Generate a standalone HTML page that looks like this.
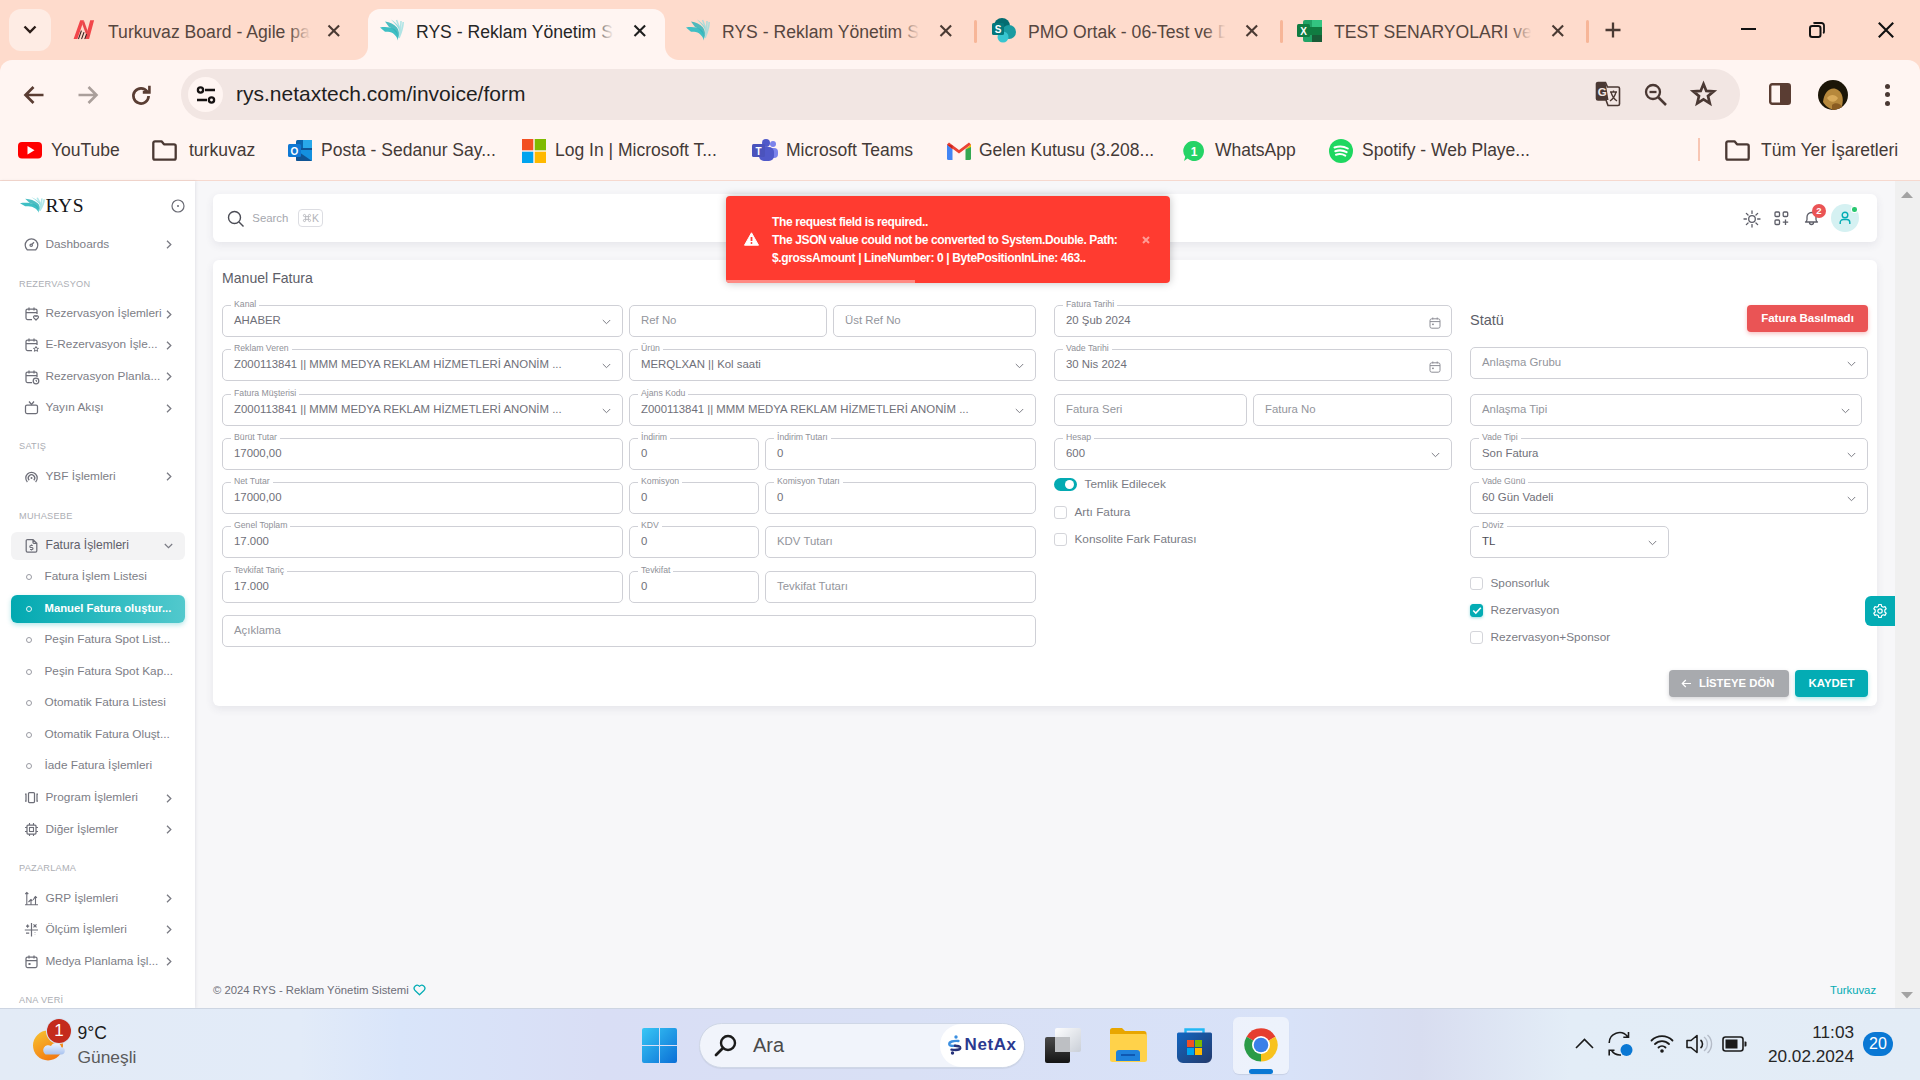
<!DOCTYPE html>
<html><head><meta charset="utf-8"><title>RYS</title>
<style>
*{box-sizing:border-box;margin:0;padding:0}
html,body{width:1920px;height:1080px;overflow:hidden;font-family:"Liberation Sans",sans-serif;background:#f5f5f9;position:relative}
.a{position:absolute}
svg{display:block;overflow:visible}
.tabt{position:absolute;font-size:17.6px;color:#303030;white-space:nowrap;overflow:hidden;height:24px;line-height:24px}
.fade{position:absolute;top:0;right:0;width:24px;height:24px}
.bm{position:absolute;font-size:17.5px;color:#443a37;line-height:24px;white-space:nowrap}
.sb{position:absolute;font-size:11.8px;color:#7c7d86;white-space:nowrap;line-height:16px}
.sec{position:absolute;font-size:9.2px;color:#acaeb4;letter-spacing:.25px;line-height:12px}
.card{position:absolute;background:#fff;border-radius:6px;box-shadow:0 3px 9px rgba(60,60,90,.09)}
.fld{position:absolute;border:1px solid #cfd0d6;border-radius:5px;background:#fff}
.fld .v{position:absolute;left:11px;top:0;line-height:29px;font-size:11.4px;color:#6f7079;white-space:nowrap}
.fld .ph{color:#93959c}
.fld .l{position:absolute;left:8px;top:-7px;font-size:8.7px;line-height:10px;color:#8f9198;background:#fff;padding:0 3px;white-space:nowrap}
.chev{position:absolute;right:12px;top:11px}
.cbx{position:absolute;width:13px;height:13px;border:1px solid #d4d5da;border-radius:3px;background:#fff}
.ct{position:absolute;font-size:11.8px;color:#7a7b84;line-height:14px;white-space:nowrap}
</style></head><body>
<div class="a" style="left:0;top:0;width:1920px;height:80px;background:#fedbcc"></div>
<div class="a" style="left:9px;top:9px;width:42px;height:42px;border-radius:12px;background:#feece4"></div>
<svg class="a" style="left:21px;top:24px" width="18" height="12" viewBox="0 0 18 12"><path d="M3.5 2.5 L9 8 L14.5 2.5" fill="none" stroke="#2b1d18" stroke-width="2.4"/></svg>
<div class="a" style="left:368px;top:9px;width:297px;height:52px;background:#fff5f2;border-radius:12px 12px 0 0"></div>
<svg class="a" style="left:73px;top:20px" width="22" height="19" viewBox="0 0 22 19">
<path d="M0.6 18.9 L4.4 18.9 L10.8 0.3 L7.2 0.3 Z M12.2 18.9 L16.1 18.9 L21.1 0.3 L17.2 0.3 Z" fill="#f2464a"/>
<path d="M9.2 4 L10.8 0.3 L16.3 15.5 L14.8 18.9 Z" fill="#e8474b"/>
<path d="M5.6 18.6 L8.3 11 M8.7 18.6 L10.9 12.5 M11.9 18.6 L13.4 14.5" stroke="#3a2222" stroke-width="1.1" stroke-linecap="round"/></svg>
<div class="tabt" style="left:108px;top:20px;width:205px;color:#56463f">Turkuvaz Board - Agile pano<div class="fade" style="background:linear-gradient(90deg,#fedbcc00,#fedbcc 90%)"></div></div>
<svg class="a" style="left:328.2px;top:25.2px" width="11.6" height="11.6" viewBox="0 0 11.6 11.6"><path d="M0.5 0.5 L11.1 11.1 M11.1 0.5 L0.5 11.1" stroke="#4a3a33" stroke-width="2.1"/></svg>
<svg class="a" style="left:380px;top:19px" width="24" height="22" viewBox="0 0 24 22" preserveAspectRatio="none">
<path d="M0 8.5 C5 7.5 11 8 15 10.5 C17.5 12.5 18.5 16 18 21.5 C16.5 16.5 13 13 8 12.7 L5 12.8 Z" fill="#3fbfc4"/>
<path d="M5 2.5 C10 3 14 5 17 8.5 C19 11 19.5 15 18.5 19 C17 14 14 10 9 8 Z" fill="#2fb3b9" opacity=".85"/>
<path d="M11 0.5 C14 2 17 5 19 8 L20 12 C18 8 15 4.5 11 0.5Z" fill="#7fd8db" opacity=".85"/>
<path d="M16.5 1 C18 4 19.5 8 20 13 M21 2 C21 6 20.5 10 19.5 16 M23.2 3 C23 8 22 12 19 19" fill="none" stroke="#8fdde0" stroke-width="1.6" opacity=".7"/>
</svg>
<div class="tabt" style="left:416px;top:20px;width:200px;color:#262626">RYS - Reklam Yönetim Sistemi<div class="fade" style="background:linear-gradient(90deg,#fff5f200,#fff5f2 90%)"></div></div>
<svg class="a" style="left:634.2px;top:25.2px" width="11.6" height="11.6" viewBox="0 0 11.6 11.6"><path d="M0.5 0.5 L11.1 11.1 M11.1 0.5 L0.5 11.1" stroke="#1f1f1f" stroke-width="2.1"/></svg>
<svg class="a" style="left:686px;top:19px" width="24" height="22" viewBox="0 0 24 22" preserveAspectRatio="none">
<path d="M0 8.5 C5 7.5 11 8 15 10.5 C17.5 12.5 18.5 16 18 21.5 C16.5 16.5 13 13 8 12.7 L5 12.8 Z" fill="#3fbfc4"/>
<path d="M5 2.5 C10 3 14 5 17 8.5 C19 11 19.5 15 18.5 19 C17 14 14 10 9 8 Z" fill="#2fb3b9" opacity=".85"/>
<path d="M11 0.5 C14 2 17 5 19 8 L20 12 C18 8 15 4.5 11 0.5Z" fill="#7fd8db" opacity=".85"/>
<path d="M16.5 1 C18 4 19.5 8 20 13 M21 2 C21 6 20.5 10 19.5 16 M23.2 3 C23 8 22 12 19 19" fill="none" stroke="#8fdde0" stroke-width="1.6" opacity=".7"/>
</svg>
<div class="tabt" style="left:722px;top:20px;width:200px;color:#56463f">RYS - Reklam Yönetim Sistemi<div class="fade" style="background:linear-gradient(90deg,#fedbcc00,#fedbcc 90%)"></div></div>
<svg class="a" style="left:940.2px;top:25.2px" width="11.6" height="11.6" viewBox="0 0 11.6 11.6"><path d="M0.5 0.5 L11.1 11.1 M11.1 0.5 L0.5 11.1" stroke="#4a3a33" stroke-width="2.1"/></svg>
<div class="a" style="left:974px;top:20px;width:2.5px;height:23px;background:#f7b698;border-radius:1.5px"></div>
<svg class="a" style="left:991px;top:17px" width="26" height="26" viewBox="0 0 26 26">
<circle cx="11" cy="9" r="8" fill="#036c70"/><circle cx="18" cy="15" r="7" fill="#1a9ba1"/><circle cx="12" cy="20" r="5.5" fill="#37c6d0"/>
<rect x="1" y="6" width="12" height="12" rx="1.5" fill="#03787c"/><text x="7" y="16" font-size="10" font-weight="bold" fill="#fff" text-anchor="middle" font-family="Liberation Sans">S</text></svg>
<div class="tabt" style="left:1028px;top:20px;width:200px;color:#56463f">PMO Ortak - 06-Test ve Dokümantasyon<div class="fade" style="background:linear-gradient(90deg,#fedbcc00,#fedbcc 90%)"></div></div>
<svg class="a" style="left:1246.2px;top:25.2px" width="11.6" height="11.6" viewBox="0 0 11.6 11.6"><path d="M0.5 0.5 L11.1 11.1 M11.1 0.5 L0.5 11.1" stroke="#4a3a33" stroke-width="2.1"/></svg>
<div class="a" style="left:1280px;top:20px;width:2.5px;height:23px;background:#f7b698;border-radius:1.5px"></div>
<svg class="a" style="left:1297px;top:19px" width="26" height="24" viewBox="0 0 26 24">
<rect x="6" y="1" width="19" height="22" rx="2" fill="#21a366"/><rect x="6" y="8" width="19" height="8" fill="#107c41"/><rect x="15" y="1" width="10" height="7" fill="#33c481"/><rect x="15" y="16" width="10" height="7" fill="#185c37"/>
<rect x="0" y="5" width="13" height="13" rx="1.5" fill="#107c41"/><text x="6.5" y="15.5" font-size="10" font-weight="bold" fill="#fff" text-anchor="middle" font-family="Liberation Sans">X</text></svg>
<div class="tabt" style="left:1334px;top:20px;width:200px;color:#56463f">TEST SENARYOLARI ve SONUÇLARI<div class="fade" style="background:linear-gradient(90deg,#fedbcc00,#fedbcc 90%)"></div></div>
<svg class="a" style="left:1552.2px;top:25.2px" width="11.6" height="11.6" viewBox="0 0 11.6 11.6"><path d="M0.5 0.5 L11.1 11.1 M11.1 0.5 L0.5 11.1" stroke="#4a3a33" stroke-width="2.1"/></svg>
<div class="a" style="left:1586px;top:20px;width:2.5px;height:23px;background:#f7b698;border-radius:1.5px"></div>
<svg class="a" style="left:1605px;top:22px" width="16" height="16" viewBox="0 0 16 16"><path d="M8 0.5 V15.5 M0.5 8 H15.5" stroke="#4a3a33" stroke-width="2.3"/></svg>
<div class="a" style="left:1741px;top:27.5px;width:15px;height:2.5px;background:#111"></div>
<svg class="a" style="left:1809px;top:22px" width="16" height="16" viewBox="0 0 16 16"><rect x="1" y="4" width="10.5" height="11" rx="2.2" fill="none" stroke="#111" stroke-width="2"/><path d="M4.5 1.5 A2 2 0 0 1 6.3 1 H12.5 A2.5 2.5 0 0 1 15 3.5 V9.5 A2 2 0 0 1 14.2 11.2" fill="none" stroke="#111" stroke-width="1.8"/></svg>
<svg class="a" style="left:1877.5px;top:22px" width="16" height="16" viewBox="0 0 16 16"><path d="M0.8 0.8 L15.2 15.2 M15.2 0.8 L0.8 15.2" stroke="#111" stroke-width="2.1"/></svg>
<div class="a" style="left:0;top:60px;width:1920px;height:121px;background:#fff5f2;border-radius:12px 12px 0 0"></div>
<div class="a" style="left:0;top:180px;width:1920px;height:1px;background:#f6d9cf"></div>
<div class="a" style="left:354px;top:46px;width:14px;height:15px;background:radial-gradient(circle at 0 0,#fedbcc 13.5px,#fff5f2 14.5px)"></div>
<div class="a" style="left:665px;top:46px;width:14px;height:15px;background:radial-gradient(circle at 100% 0,#fedbcc 13.5px,#fff5f2 14.5px)"></div>
<svg class="a" style="left:23px;top:85px" width="22" height="20" viewBox="0 0 22 20"><path d="M20.5 10 H3 M10.5 2 L2.5 10 L10.5 18" fill="none" stroke="#5a3d33" stroke-width="2.7"/></svg>
<svg class="a" style="left:77px;top:85px" width="22" height="20" viewBox="0 0 22 20"><path d="M1.5 10 H19 M11.5 2 L19.5 10 L11.5 18" fill="none" stroke="#aa9f9b" stroke-width="2.6"/></svg>
<svg class="a" style="left:130px;top:84px" width="22" height="22" viewBox="0 0 22 22"><path d="M18.6 12 A7.6 7.6 0 1 1 17.2 7.5" fill="none" stroke="#5a3d33" stroke-width="2.7"/><path d="M19.4 1.8 V8.4 H12.8" fill="none" stroke="#5a3d33" stroke-width="2.6"/></svg>
<div class="a" style="left:181px;top:69px;width:1559px;height:51px;border-radius:26px;background:#f2e6e3"></div>
<div class="a" style="left:188px;top:77px;width:35px;height:35px;border-radius:50%;background:#fff5f2"></div>
<svg class="a" style="left:196px;top:86px" width="20" height="19" viewBox="0 0 20 19"><circle cx="4.5" cy="4" r="2.6" fill="none" stroke="#161212" stroke-width="2.3"/><path d="M9 4 H19" stroke="#161212" stroke-width="2.5"/><path d="M1 14 H11" stroke="#161212" stroke-width="2.5"/><circle cx="15.5" cy="14" r="2.6" fill="none" stroke="#161212" stroke-width="2.3"/></svg>
<div class="a" style="left:236px;top:81px;font-size:21px;line-height:26px;color:#1f1f1f;white-space:nowrap">rys.netaxtech.com/invoice/form</div>
<svg class="a" style="left:1595px;top:82px" width="26" height="26" viewBox="0 0 26 26">
<path d="M1.5 2 A1.5 1.5 0 0 1 3 0.5 H10.5 L12.5 5 H23 A1.5 1.5 0 0 1 24.5 6.5 V22 A1.5 1.5 0 0 1 23 23.5 H13 L11 18 H3 A1.5 1.5 0 0 1 1.5 16.5Z" fill="none" stroke="#4a3833" stroke-width="1.6"/>
<path d="M1.5 2 A1.5 1.5 0 0 1 3 0.5 H10.5 L13.5 18 H3 A1.5 1.5 0 0 1 1.5 16.5Z" fill="#4a3833"/>
<text x="7.2" y="13.5" font-size="11.5" font-weight="bold" fill="#f2e6e3" text-anchor="middle" font-family="Liberation Sans">G</text>
<path d="M15 10 H22 M18.5 8.5 V10 M16 10 C17 14 19 17 22 19 M21 10 C20 14 18 17 15 19" fill="none" stroke="#4a3833" stroke-width="1.3"/></svg>
<svg class="a" style="left:1644px;top:83px" width="24" height="24" viewBox="0 0 24 24"><circle cx="9" cy="9" r="7" fill="none" stroke="#4a3833" stroke-width="2.3"/><path d="M5.5 9 H12.5" stroke="#4a3833" stroke-width="2.3"/><path d="M14 14 L22 22" stroke="#4a3833" stroke-width="2.5"/></svg>
<svg class="a" style="left:1691px;top:82px" width="25" height="24" viewBox="0 0 25 24"><path d="M12.5 2 L15.3 8.9 L22.7 9.4 L17 14.1 L18.8 21.4 L12.5 17.4 L6.2 21.4 L8 14.1 L2.3 9.4 L9.7 8.9Z" fill="none" stroke="#4a3833" stroke-width="2.7" stroke-linejoin="miter"/></svg>
<svg class="a" style="left:1769px;top:83px" width="22" height="22" viewBox="0 0 22 22"><rect x="1.2" y="1.2" width="19.6" height="19.6" rx="2" fill="none" stroke="#5a3d33" stroke-width="2.4"/><rect x="11" y="1" width="10" height="20" rx="1" fill="#5a3d33"/></svg>
<svg class="a" style="left:1818px;top:80px" width="30" height="30" viewBox="0 0 30 30"><defs><clipPath id="avc"><circle cx="15" cy="15" r="15"/></clipPath></defs>
<circle cx="15" cy="15" r="15" fill="#1c1608"/><g clip-path="url(#avc)"><path d="M5 22 C6 12 12 7 18 9 C24 11 26 18 24 26 C20 31 10 31 5 22Z" fill="#b6883c"/><path d="M9 18 C12 14 17 14 20 18 C18 22 13 24 9 18Z" fill="#d9aa5a"/><path d="M14 25 C17 22 22 23 26 28 L14 32Z" fill="#8a5c22"/></g></svg>
<div class="a" style="left:1884.5px;top:83.5px;width:5px;height:5px;border-radius:50%;background:#4a3833"></div>
<div class="a" style="left:1884.5px;top:92.0px;width:5px;height:5px;border-radius:50%;background:#4a3833"></div>
<div class="a" style="left:1884.5px;top:100.5px;width:5px;height:5px;border-radius:50%;background:#4a3833"></div>
<svg class="a" style="left:18px;top:141px" width="24" height="18" viewBox="0 0 24 18"><rect x="0" y="1" width="24" height="16.5" rx="4" fill="#ff0000"/><path d="M9.5 5 L16.5 9.2 L9.5 13.4Z" fill="#fff"/></svg>
<div class="bm" style="left:51px;top:138px">YouTube</div>
<svg class="a" style="left:152px;top:140px" width="25" height="21" viewBox="0 0 25 21"><path d="M1.3 3 A1.7 1.7 0 0 1 3 1.3 H9.5 L12 4.3 H22 A1.7 1.7 0 0 1 23.7 6 V18 A1.7 1.7 0 0 1 22 19.7 H3 A1.7 1.7 0 0 1 1.3 18Z" fill="none" stroke="#4a3833" stroke-width="2.3" stroke-linejoin="round"/></svg>
<div class="bm" style="left:189px;top:138px">turkuvaz</div>
<svg class="a" style="left:288px;top:139px" width="25" height="23" viewBox="0 0 25 23">
<rect x="8" y="1" width="16" height="21" rx="1.5" fill="#0a64ad"/><rect x="15" y="1" width="9" height="8" fill="#28a8ea"/><rect x="8" y="9" width="16" height="13" fill="#14447d" opacity=".5"/><path d="M8 11 L24 22 V11Z" fill="#1490df"/>
<rect x="0" y="5" width="13" height="13" rx="1.5" fill="#0f78d4"/><text x="6.5" y="15.5" font-size="10" font-weight="bold" fill="#fff" text-anchor="middle" font-family="Liberation Sans">O</text></svg>
<div class="bm" style="left:321px;top:138px">Posta - Sedanur Say...</div>
<svg class="a" style="left:522px;top:139px" width="24" height="24" viewBox="0 0 24 24"><rect x="0" y="0" width="11.3" height="11.3" fill="#f25022"/><rect x="12.7" y="0" width="11.3" height="11.3" fill="#7fba00"/><rect x="0" y="12.7" width="11.3" height="11.3" fill="#00a4ef"/><rect x="12.7" y="12.7" width="11.3" height="11.3" fill="#ffb900"/></svg>
<div class="bm" style="left:555px;top:138px">Log In | Microsoft T...</div>
<svg class="a" style="left:752px;top:139px" width="26" height="23" viewBox="0 0 26 23">
<circle cx="21" cy="5" r="3" fill="#7b83eb"/><rect x="16" y="9" width="10" height="10" rx="4" fill="#7b83eb"/><circle cx="14" cy="4" r="4" fill="#5059c9"/><rect x="7" y="8" width="15" height="14" rx="5" fill="#5059c9"/>
<rect x="0" y="5" width="13" height="13" rx="1.5" fill="#4b53bc"/><text x="6.5" y="15.5" font-size="10" font-weight="bold" fill="#fff" text-anchor="middle" font-family="Liberation Sans">T</text></svg>
<div class="bm" style="left:786px;top:138px">Microsoft Teams</div>
<svg class="a" style="left:947px;top:142px" width="24" height="18" viewBox="0 0 24 18">
<path d="M0 2.5 V16.5 A1.5 1.5 0 0 0 1.5 18 H5.5 V7.5Z" fill="#4285f4"/><path d="M24 2.5 V16.5 A1.5 1.5 0 0 1 22.5 18 H18.5 V7.5Z" fill="#34a853"/>
<path d="M0 2.5 L12 11.5 L24 2.5 L22 0.5 L12 8 L2 0.5Z" fill="#ea4335"/><path d="M18.5 7.5 L24 2.5 V5Z" fill="#fbbc04"/><path d="M0 2.5 L5.5 7.5 V3.5Z" fill="#c5221f"/></svg>
<div class="bm" style="left:979px;top:138px">Gelen Kutusu (3.208...</div>
<svg class="a" style="left:1183px;top:140px" width="22" height="22" viewBox="0 0 22 22"><path d="M11 1 A10 10 0 1 1 4.5 18.6 L1 21 L2.2 16.8 A10 10 0 0 1 11 1Z" fill="#25d366"/><text x="11" y="15.5" font-size="12" font-weight="bold" fill="#fff" text-anchor="middle" font-family="Liberation Sans">1</text></svg>
<div class="bm" style="left:1215px;top:138px">WhatsApp</div>
<svg class="a" style="left:1329px;top:139px" width="24" height="24" viewBox="0 0 24 24"><circle cx="12" cy="12" r="12" fill="#1ed760"/><path d="M5.5 8.5 C9.5 7 15 7.3 18.8 9.5 M6.3 12.2 C9.8 11 14.3 11.3 17.6 13.2 M7 15.7 C10 14.8 13.5 15 16.3 16.6" fill="none" stroke="#fff" stroke-width="2" stroke-linecap="round"/></svg>
<div class="bm" style="left:1362px;top:138px">Spotify - Web Playe...</div>
<div class="a" style="left:1698px;top:138px;width:2px;height:23px;background:#f8c6b4"></div>
<svg class="a" style="left:1725px;top:140px" width="25" height="21" viewBox="0 0 25 21"><path d="M1.3 3 A1.7 1.7 0 0 1 3 1.3 H9.5 L12 4.3 H22 A1.7 1.7 0 0 1 23.7 6 V18 A1.7 1.7 0 0 1 22 19.7 H3 A1.7 1.7 0 0 1 1.3 18Z" fill="none" stroke="#4a3833" stroke-width="2.3" stroke-linejoin="round"/></svg>
<div class="bm" style="left:1761px;top:138px">Tüm Yer İşaretleri</div>
<div class="a" style="left:195px;top:181px;width:1725px;height:827px;background:#f7f7f9"></div>
<div class="a" style="left:0;top:181px;width:195px;height:827px;background:#fff;box-shadow:1px 0 3px rgba(60,60,90,.10)"></div>
<svg class="a" style="left:20px;top:196.5px" width="25" height="16" viewBox="0 0 24 22" preserveAspectRatio="none">
<path d="M0 8.5 C5 7.5 11 8 15 10.5 C17.5 12.5 18.5 16 18 21.5 C16.5 16.5 13 13 8 12.7 L5 12.8 Z" fill="#3fbfc4"/>
<path d="M5 2.5 C10 3 14 5 17 8.5 C19 11 19.5 15 18.5 19 C17 14 14 10 9 8 Z" fill="#2fb3b9" opacity=".85"/>
<path d="M11 0.5 C14 2 17 5 19 8 L20 12 C18 8 15 4.5 11 0.5Z" fill="#7fd8db" opacity=".85"/>
<path d="M16.5 1 C18 4 19.5 8 20 13 M21 2 C21 6 20.5 10 19.5 16 M23.2 3 C23 8 22 12 19 19" fill="none" stroke="#8fdde0" stroke-width="1.6" opacity=".7"/>
</svg>
<div class="a" style="left:45.5px;top:194.5px;font-family:'Liberation Serif',serif;font-size:19.5px;line-height:22px;color:#15161a;letter-spacing:.6px">RYS</div>
<svg class="a" style="left:171px;top:199px" width="14" height="14" viewBox="0 0 14 14"><circle cx="7" cy="7" r="6" fill="none" stroke="#6a6b74" stroke-width="1.2"/><circle cx="7" cy="7" r="1" fill="#6a6b74"/></svg>
<svg class="a" style="left:24px;top:236.5px" width="15" height="15" viewBox="0 0 15 15"><path d="M3.2 12.8 A6.3 6.3 0 1 1 11.8 12.8 Z" fill="none" stroke="#6d6e78" stroke-width="1.25" stroke-linejoin="round"/><circle cx="7.2" cy="8.2" r="1.2" fill="none" stroke="#6d6e78" stroke-width="1.25"/><path d="M8 7.3 L10 5.3" stroke="#6d6e78" stroke-width="1.25"/></svg>
<div class="sb" style="left:45.5px;top:235.5px">Dashboards</div>
<svg class="a" style="left:166px;top:240px" width="6" height="9" viewBox="0 0 6 9"><path d="M1 0.8 L4.8 4.5 L1 8.2" fill="none" stroke="#7a7b84" stroke-width="1.3"/></svg>
<div class="sec" style="left:19px;top:277.5px">REZERVASYON</div>
<svg class="a" style="left:24px;top:306.0px" width="15" height="15" viewBox="0 0 15 15"><path d="M8 13.5 H3.5 A1.5 1.5 0 0 1 2 12 V4.5 A1.5 1.5 0 0 1 3.5 3 H11.5 A1.5 1.5 0 0 1 13 4.5 V8" fill="none" stroke="#6d6e78" stroke-width="1.25"/><path d="M10 1.5 V4.5 M5 1.5 V4.5 M2 6.5 H13" stroke="#6d6e78" stroke-width="1.25"/><path d="M12 14 L9.8 11.9 A1.2 1.2 0 0 1 12 10.4 A1.2 1.2 0 0 1 14.2 11.9Z" fill="none" stroke="#6d6e78" stroke-width="1.25" stroke-linejoin="round"/></svg>
<div class="sb" style="left:45.5px;top:305.0px">Rezervasyon İşlemleri</div>
<svg class="a" style="left:166px;top:309.5px" width="6" height="9" viewBox="0 0 6 9"><path d="M1 0.8 L4.8 4.5 L1 8.2" fill="none" stroke="#7a7b84" stroke-width="1.3"/></svg>
<svg class="a" style="left:24px;top:337.2px" width="15" height="15" viewBox="0 0 15 15"><path d="M8 13.5 H3.5 A1.5 1.5 0 0 1 2 12 V4.5 A1.5 1.5 0 0 1 3.5 3 H11.5 A1.5 1.5 0 0 1 13 4.5 V8" fill="none" stroke="#6d6e78" stroke-width="1.25"/><path d="M10 1.5 V4.5 M5 1.5 V4.5 M2 6.5 H13" stroke="#6d6e78" stroke-width="1.25"/><path d="M12 9.5 L12.8 11.2 L14.5 11.4 L13.2 12.6 L13.6 14.3 L12 13.4 L10.4 14.3 L10.8 12.6 L9.5 11.4 L11.2 11.2Z" fill="none" stroke="#6d6e78" stroke-width="1" stroke-linejoin="round"/></svg>
<div class="sb" style="left:45.5px;top:336.2px">E-Rezervasyon İşle...</div>
<svg class="a" style="left:166px;top:340.7px" width="6" height="9" viewBox="0 0 6 9"><path d="M1 0.8 L4.8 4.5 L1 8.2" fill="none" stroke="#7a7b84" stroke-width="1.3"/></svg>
<svg class="a" style="left:24px;top:368.9px" width="15" height="15" viewBox="0 0 15 15"><path d="M8 13.5 H3.5 A1.5 1.5 0 0 1 2 12 V4.5 A1.5 1.5 0 0 1 3.5 3 H11.5 A1.5 1.5 0 0 1 13 4.5 V8" fill="none" stroke="#6d6e78" stroke-width="1.25"/><path d="M10 1.5 V4.5 M5 1.5 V4.5 M2 6.5 H13" stroke="#6d6e78" stroke-width="1.25"/><circle cx="12" cy="12" r="2.8" fill="none" stroke="#6d6e78" stroke-width="1.25"/><path d="M12 10.8 V12 L12.8 12.6" stroke="#6d6e78" stroke-width="1"/></svg>
<div class="sb" style="left:45.5px;top:367.9px">Rezervasyon Planla...</div>
<svg class="a" style="left:166px;top:372.4px" width="6" height="9" viewBox="0 0 6 9"><path d="M1 0.8 L4.8 4.5 L1 8.2" fill="none" stroke="#7a7b84" stroke-width="1.3"/></svg>
<svg class="a" style="left:24px;top:400.0px" width="15" height="15" viewBox="0 0 15 15"><rect x="1.5" y="5" width="12" height="8.5" rx="1.5" fill="none" stroke="#6d6e78" stroke-width="1.25"/><path d="M5 1.5 L7.5 4.5 L10 1.5 M10 7.5 V7.6 M10 10 V10.1" fill="none" stroke="#6d6e78" stroke-width="1.25"/></svg>
<div class="sb" style="left:45.5px;top:399.0px">Yayın Akışı</div>
<svg class="a" style="left:166px;top:403.5px" width="6" height="9" viewBox="0 0 6 9"><path d="M1 0.8 L4.8 4.5 L1 8.2" fill="none" stroke="#7a7b84" stroke-width="1.3"/></svg>
<div class="sec" style="left:19px;top:440.0px">SATIŞ</div>
<svg class="a" style="left:24px;top:468.8px" width="15" height="15" viewBox="0 0 15 15"><circle cx="7.5" cy="9" r="1" fill="#6d6e78"/><path d="M5.2 11.3 A3.2 3.2 0 1 1 9.8 11.3 M3.4 13 A5.7 5.7 0 1 1 11.6 13" fill="none" stroke="#6d6e78" stroke-width="1.25"/></svg>
<div class="sb" style="left:45.5px;top:467.8px">YBF İşlemleri</div>
<svg class="a" style="left:166px;top:472.3px" width="6" height="9" viewBox="0 0 6 9"><path d="M1 0.8 L4.8 4.5 L1 8.2" fill="none" stroke="#7a7b84" stroke-width="1.3"/></svg>
<div class="sec" style="left:19px;top:509.5px">MUHASEBE</div>
<div class="a" style="left:11px;top:532px;width:174px;height:28px;border-radius:6px;background:#f3f3f4"></div>
<svg class="a" style="left:24px;top:537.5px" width="15" height="15" viewBox="0 0 15 15"><path d="M9 1.5 V4.5 A0.8 0.8 0 0 0 9.8 5.3 H12.5 M11.5 14 H3.5 A1.3 1.3 0 0 1 2.2 12.7 V2.8 A1.3 1.3 0 0 1 3.5 1.5 H9 L12.8 5.3 V12.7 A1.3 1.3 0 0 1 11.5 14Z" fill="none" stroke="#6d6e78" stroke-width="1.25"/><path d="M8.8 7.5 H6.8 A1 1 0 0 0 6.8 9.5 H8 A1 1 0 0 1 8 11.5 H6 M7.5 6.5 V7.5 M7.5 11.5 V12.5" fill="none" stroke="#6d6e78" stroke-width="1.1"/></svg>
<div class="sb" style="left:45.5px;top:536.5px;color:#5f606a;font-size:12.1px">Fatura İşlemleri</div>
<svg class="a" style="left:164px;top:543px" width="9" height="6" viewBox="0 0 9 6"><path d="M0.8 1 L4.5 4.7 L8.2 1" fill="none" stroke="#7a7b84" stroke-width="1.2"/></svg>
<div class="a" style="left:25.5px;top:573.7px;width:6px;height:6px;border-radius:50%;border:1.1px solid #9a9ba3"></div>
<div class="sb" style="left:44.5px;top:567.7px">Fatura İşlem Listesi</div>
<div class="a" style="left:11px;top:595px;width:174px;height:28px;border-radius:6px;background:linear-gradient(90deg,#02a9b1,#52c9cd);box-shadow:0 2px 5px rgba(3,172,180,.3)"></div>
<div class="a" style="left:25.5px;top:606.1px;width:6px;height:6px;border-radius:50%;border:1.1px solid #e6f7f8"></div>
<div class="sb" style="left:44.5px;top:600.1px;color:#fff;font-weight:bold;font-size:11.3px">Manuel Fatura oluştur...</div>
<div class="a" style="left:25.5px;top:637.2px;width:6px;height:6px;border-radius:50%;border:1.1px solid #9a9ba3"></div>
<div class="sb" style="left:44.5px;top:631.2px">Peşin Fatura Spot List...</div>
<div class="a" style="left:25.5px;top:668.9px;width:6px;height:6px;border-radius:50%;border:1.1px solid #9a9ba3"></div>
<div class="sb" style="left:44.5px;top:662.9px">Peşin Fatura Spot Kap...</div>
<div class="a" style="left:25.5px;top:699.7px;width:6px;height:6px;border-radius:50%;border:1.1px solid #9a9ba3"></div>
<div class="sb" style="left:44.5px;top:693.7px">Otomatik Fatura Listesi</div>
<div class="a" style="left:25.5px;top:731.5px;width:6px;height:6px;border-radius:50%;border:1.1px solid #9a9ba3"></div>
<div class="sb" style="left:44.5px;top:725.5px">Otomatik Fatura Oluşt...</div>
<div class="a" style="left:25.5px;top:762.7px;width:6px;height:6px;border-radius:50%;border:1.1px solid #9a9ba3"></div>
<div class="sb" style="left:44.5px;top:756.7px">İade Fatura İşlemleri</div>
<svg class="a" style="left:24px;top:790.0px" width="15" height="15" viewBox="0 0 15 15"><rect x="4.5" y="2.5" width="6" height="10" rx="1" fill="none" stroke="#6d6e78" stroke-width="1.25"/><path d="M1 4 H2 V11 H1 M14 4 H13 V11 H14" fill="none" stroke="#6d6e78" stroke-width="1.25"/></svg>
<div class="sb" style="left:45.5px;top:789.0px">Program İşlemleri</div>
<svg class="a" style="left:166px;top:793.5px" width="6" height="9" viewBox="0 0 6 9"><path d="M1 0.8 L4.8 4.5 L1 8.2" fill="none" stroke="#7a7b84" stroke-width="1.3"/></svg>
<svg class="a" style="left:24px;top:821.8px" width="15" height="15" viewBox="0 0 15 15"><rect x="3" y="3" width="9" height="9" rx="1" fill="none" stroke="#6d6e78" stroke-width="1.25"/><rect x="5.5" y="5.5" width="4" height="4" fill="none" stroke="#6d6e78" stroke-width="1.1"/><path d="M1 5.5 H3 M1 9.5 H3 M12 5.5 H14 M12 9.5 H14 M5.5 1 V3 M9.5 1 V3 M5.5 12 V14 M9.5 12 V14" stroke="#6d6e78" stroke-width="1.1"/></svg>
<div class="sb" style="left:45.5px;top:820.8px">Diğer İşlemler</div>
<svg class="a" style="left:166px;top:825.3px" width="6" height="9" viewBox="0 0 6 9"><path d="M1 0.8 L4.8 4.5 L1 8.2" fill="none" stroke="#7a7b84" stroke-width="1.3"/></svg>
<div class="sec" style="left:19px;top:862.0px">PAZARLAMA</div>
<svg class="a" style="left:24px;top:890.5px" width="15" height="15" viewBox="0 0 15 15"><path d="M1 13.8 H14 M2.8 13.8 V1.5 M1.3 3 L2.8 1.5 L4.3 3 M7 13.8 V8.5 M5.6 9.9 L7 8.5 L8.4 9.9 M11.5 13.8 V5.5 M10.1 6.9 L11.5 5.5 L12.9 6.9 M4.5 11 L7 8.5 M9 9 L11.5 5.5" fill="none" stroke="#6d6e78" stroke-width="1.1"/></svg>
<div class="sb" style="left:45.5px;top:889.5px">GRP İşlemleri</div>
<svg class="a" style="left:166px;top:894px" width="6" height="9" viewBox="0 0 6 9"><path d="M1 0.8 L4.8 4.5 L1 8.2" fill="none" stroke="#7a7b84" stroke-width="1.3"/></svg>
<svg class="a" style="left:24px;top:921.9px" width="15" height="15" viewBox="0 0 15 15"><path d="M0.8 8 H14 M7.5 1 V14.5 M2 4.2 H5.2 M3.6 2.6 V5.8 M9.5 2.4 L12.5 5.4 M12.5 2.4 L9.5 5.4 M2 11.2 H5.2 M11 10 V10.4 M11 12.4 V12.8" fill="none" stroke="#6d6e78" stroke-width="1.2"/></svg>
<div class="sb" style="left:45.5px;top:920.9px">Ölçüm İşlemleri</div>
<svg class="a" style="left:166px;top:925.4px" width="6" height="9" viewBox="0 0 6 9"><path d="M1 0.8 L4.8 4.5 L1 8.2" fill="none" stroke="#7a7b84" stroke-width="1.3"/></svg>
<svg class="a" style="left:24px;top:953.5px" width="15" height="15" viewBox="0 0 15 15"><rect x="2" y="3" width="11" height="10.5" rx="1.5" fill="none" stroke="#6d6e78" stroke-width="1.25"/><path d="M10 1.5 V4.5 M5 1.5 V4.5 M2 6.5 H13" stroke="#6d6e78" stroke-width="1.25"/><rect x="4.5" y="9" width="2" height="2" fill="#6d6e78"/></svg>
<div class="sb" style="left:45.5px;top:952.5px">Medya Planlama İşl...</div>
<svg class="a" style="left:166px;top:957px" width="6" height="9" viewBox="0 0 6 9"><path d="M1 0.8 L4.8 4.5 L1 8.2" fill="none" stroke="#7a7b84" stroke-width="1.3"/></svg>
<div class="sec" style="left:19px;top:994.0px">ANA VERİ</div>
<div class="card" style="left:213px;top:194px;width:1664px;height:48px"></div>
<svg class="a" style="left:227px;top:210px" width="18" height="18" viewBox="0 0 18 18"><circle cx="7.5" cy="7.5" r="6" fill="none" stroke="#4b4c55" stroke-width="1.4"/><path d="M12 12 L16.5 16.5" stroke="#4b4c55" stroke-width="1.4"/></svg>
<div class="a" style="left:252.3px;top:211px;font-size:11.4px;line-height:14px;color:#a5a7ae">Search</div>
<div class="a" style="left:298px;top:209px;width:25px;height:18px;border:1px solid #dcdde2;border-radius:4px;font-size:10.5px;line-height:16px;color:#b3b4ba;text-align:left;padding-left:13px">K</div>
<svg class="a" style="left:303px;top:214px" width="8" height="8" viewBox="0 0 8 8"><path d="M2.6 2.6 H5.4 V5.4 H2.6Z M2.6 2.6 V1.5 A1.1 1.1 0 1 0 1.5 2.6 H2.6 M5.4 2.6 V1.5 A1.1 1.1 0 1 1 6.5 2.6 H5.4 M2.6 5.4 V6.5 A1.1 1.1 0 1 1 1.5 5.4 H2.6 M5.4 5.4 V6.5 A1.1 1.1 0 1 0 6.5 5.4 H5.4" fill="none" stroke="#b3b4ba" stroke-width=".9"/></svg>
<svg class="a" style="left:1742.6px;top:209.7px" width="18" height="18" viewBox="0 0 18 18"><circle cx="9" cy="9" r="3.3" fill="none" stroke="#5d5e68" stroke-width="1.3"/><path d="M14.60 9.00 L17.00 9.00" stroke="#5d5e68" stroke-width="1.3" stroke-linecap="round"/><path d="M12.96 12.96 L14.66 14.66" stroke="#5d5e68" stroke-width="1.3" stroke-linecap="round"/><path d="M9.00 14.60 L9.00 17.00" stroke="#5d5e68" stroke-width="1.3" stroke-linecap="round"/><path d="M5.04 12.96 L3.34 14.66" stroke="#5d5e68" stroke-width="1.3" stroke-linecap="round"/><path d="M3.40 9.00 L1.00 9.00" stroke="#5d5e68" stroke-width="1.3" stroke-linecap="round"/><path d="M5.04 5.04 L3.34 3.34" stroke="#5d5e68" stroke-width="1.3" stroke-linecap="round"/><path d="M9.00 3.40 L9.00 1.00" stroke="#5d5e68" stroke-width="1.3" stroke-linecap="round"/><path d="M12.96 5.04 L14.66 3.34" stroke="#5d5e68" stroke-width="1.3" stroke-linecap="round"/></svg>
<svg class="a" style="left:1774px;top:211px" width="16" height="15" viewBox="0 0 16 15"><rect x="1" y="1" width="4.5" height="4.5" rx="1" fill="none" stroke="#5d5e68" stroke-width="1.3"/><rect x="9.2" y="1" width="4.5" height="4.5" rx="1" fill="none" stroke="#5d5e68" stroke-width="1.3"/><rect x="1" y="9" width="4.5" height="4.5" rx="1" fill="none" stroke="#5d5e68" stroke-width="1.3"/><path d="M11.5 8.5 V14 M8.8 11.2 H14.2" stroke="#5d5e68" stroke-width="1.3"/></svg>
<svg class="a" style="left:1804px;top:210px" width="16" height="17" viewBox="0 0 16 17"><path d="M7.5 2.5 A4.5 4.5 0 0 1 12 7 V9.5 A3 3 0 0 0 13.5 12 H1.5 A3 3 0 0 0 3 9.5 V7 A4.5 4.5 0 0 1 7.5 2.5Z M5.5 12.5 A2 2 0 0 0 9.5 12.5" fill="none" stroke="#5d5e68" stroke-width="1.3" stroke-linejoin="round"/></svg>
<div class="a" style="left:1812px;top:204px;width:14px;height:14px;border-radius:50%;background:#ea5455;color:#fff;font-size:9.5px;font-weight:bold;line-height:14px;text-align:center">2</div>
<div class="a" style="left:1831px;top:204px;width:28px;height:28px;border-radius:50%;background:#d5f1f2"></div>
<svg class="a" style="left:1838px;top:211px" width="14" height="14" viewBox="0 0 14 14"><circle cx="7" cy="4" r="2.8" fill="none" stroke="#03acb4" stroke-width="1.4"/><path d="M2.2 13 V11.5 A3 3 0 0 1 5.2 8.5 H8.8 A3 3 0 0 1 11.8 11.5 V13" fill="none" stroke="#03acb4" stroke-width="1.4"/></svg>
<div class="a" style="left:1852px;top:207px;width:4.5px;height:4.5px;border-radius:50%;background:#28c76f;box-shadow:0 0 0 1px #fff"></div>
<div class="card" style="left:213px;top:260px;width:1664px;height:446px"></div>
<div class="a" style="left:222px;top:270px;font-size:14.1px;line-height:17px;color:#5d5e68">Manuel Fatura</div>
<div class="fld" style="left:222px;top:305px;width:401px;height:32px"><div class="l">Kanal</div><div class="v">AHABER</div><svg class="chev" width="9" height="6" viewBox="0 0 9 6" style="right:11.5px;top:13px"><path d="M0.8 1 L4.5 4.7 L8.2 1" fill="none" stroke="#7d7e86" stroke-width="1"/></svg></div>
<div class="fld" style="left:629px;top:305px;width:198px;height:32px"><div class="v ph">Ref No</div></div>
<div class="fld" style="left:833px;top:305px;width:203px;height:32px"><div class="v ph">Üst Ref No</div></div>
<div class="fld" style="left:222px;top:349px;width:401px;height:32px"><div class="l">Reklam Veren</div><div class="v">Z000113841 || MMM MEDYA REKLAM HİZMETLERİ ANONİM ...</div><svg class="chev" width="9" height="6" viewBox="0 0 9 6" style="right:11.5px;top:13px"><path d="M0.8 1 L4.5 4.7 L8.2 1" fill="none" stroke="#7d7e86" stroke-width="1"/></svg></div>
<div class="fld" style="left:629px;top:349px;width:407px;height:32px"><div class="l">Ürün</div><div class="v">MERQLXAN || Kol saati</div><svg class="chev" width="9" height="6" viewBox="0 0 9 6" style="right:11.5px;top:13px"><path d="M0.8 1 L4.5 4.7 L8.2 1" fill="none" stroke="#7d7e86" stroke-width="1"/></svg></div>
<div class="fld" style="left:222px;top:394px;width:401px;height:32px"><div class="l">Fatura Müşterisi</div><div class="v">Z000113841 || MMM MEDYA REKLAM HİZMETLERİ ANONİM ...</div><svg class="chev" width="9" height="6" viewBox="0 0 9 6" style="right:11.5px;top:13px"><path d="M0.8 1 L4.5 4.7 L8.2 1" fill="none" stroke="#7d7e86" stroke-width="1"/></svg></div>
<div class="fld" style="left:629px;top:394px;width:407px;height:32px"><div class="l">Ajans Kodu</div><div class="v">Z000113841 || MMM MEDYA REKLAM HİZMETLERİ ANONİM ...</div><svg class="chev" width="9" height="6" viewBox="0 0 9 6" style="right:11.5px;top:13px"><path d="M0.8 1 L4.5 4.7 L8.2 1" fill="none" stroke="#7d7e86" stroke-width="1"/></svg></div>
<div class="fld" style="left:222px;top:438px;width:401px;height:32px"><div class="l">Bürüt Tutar</div><div class="v">17000,00</div></div>
<div class="fld" style="left:629px;top:438px;width:130px;height:32px"><div class="l">İndirim</div><div class="v">0</div></div>
<div class="fld" style="left:765px;top:438px;width:271px;height:32px"><div class="l">İndirim Tutarı</div><div class="v">0</div></div>
<div class="fld" style="left:222px;top:482px;width:401px;height:32px"><div class="l">Net Tutar</div><div class="v">17000,00</div></div>
<div class="fld" style="left:629px;top:482px;width:130px;height:32px"><div class="l">Komisyon</div><div class="v">0</div></div>
<div class="fld" style="left:765px;top:482px;width:271px;height:32px"><div class="l">Komisyon Tutarı</div><div class="v">0</div></div>
<div class="fld" style="left:222px;top:526px;width:401px;height:32px"><div class="l">Genel Toplam</div><div class="v">17.000</div></div>
<div class="fld" style="left:629px;top:526px;width:130px;height:32px"><div class="l">KDV</div><div class="v">0</div></div>
<div class="fld" style="left:765px;top:526px;width:271px;height:32px"><div class="v ph">KDV Tutarı</div></div>
<div class="fld" style="left:222px;top:571px;width:401px;height:32px"><div class="l">Tevkifat Tariç</div><div class="v">17.000</div></div>
<div class="fld" style="left:629px;top:571px;width:130px;height:32px"><div class="l">Tevkifat</div><div class="v">0</div></div>
<div class="fld" style="left:765px;top:571px;width:271px;height:32px"><div class="v ph">Tevkifat Tutarı</div></div>
<div class="fld" style="left:222px;top:615px;width:814px;height:32px"><div class="v ph">Açıklama</div></div>
<div class="fld" style="left:1054px;top:305px;width:398px;height:32px"><div class="l">Fatura Tarihi</div><div class="v">20 Şub 2024</div><svg class="chev" width="12" height="12" viewBox="0 0 12 12" style="right:10.5px;top:11px"><rect x="1" y="1.8" width="10" height="9.4" rx="1.8" fill="none" stroke="#8d8e96" stroke-width="1"/><path d="M1 4.6 H11 M3.8 0.5 V2.5 M8.2 0.5 V2.5" stroke="#8d8e96" stroke-width="1"/><rect x="3.2" y="6.6" width="1.5" height="1.5" fill="#7d7e86"/></svg></div>
<div class="fld" style="left:1054px;top:349px;width:398px;height:32px"><div class="l">Vade Tarihi</div><div class="v">30 Nis 2024</div><svg class="chev" width="12" height="12" viewBox="0 0 12 12" style="right:10.5px;top:11px"><rect x="1" y="1.8" width="10" height="9.4" rx="1.8" fill="none" stroke="#8d8e96" stroke-width="1"/><path d="M1 4.6 H11 M3.8 0.5 V2.5 M8.2 0.5 V2.5" stroke="#8d8e96" stroke-width="1"/><rect x="3.2" y="6.6" width="1.5" height="1.5" fill="#7d7e86"/></svg></div>
<div class="fld" style="left:1054px;top:394px;width:193px;height:32px"><div class="v ph">Fatura Seri</div></div>
<div class="fld" style="left:1253px;top:394px;width:199px;height:32px"><div class="v ph">Fatura No</div></div>
<div class="fld" style="left:1054px;top:438px;width:398px;height:32px"><div class="l">Hesap</div><div class="v">600</div><svg class="chev" width="9" height="6" viewBox="0 0 9 6" style="right:11.5px;top:13px"><path d="M0.8 1 L4.5 4.7 L8.2 1" fill="none" stroke="#7d7e86" stroke-width="1"/></svg></div>
<div class="a" style="left:1054px;top:478px;width:23px;height:13px;border-radius:7px;background:#03aab2"></div>
<div class="a" style="left:1064.5px;top:480px;width:9px;height:9px;border-radius:50%;background:#fff"></div>
<div class="ct" style="left:1084.5px;top:477px">Temlik Edilecek</div>
<div class="cbx" style="left:1054px;top:506px"></div>
<div class="ct" style="left:1074.5px;top:505px">Artı Fatura</div>
<div class="cbx" style="left:1054px;top:533px"></div>
<div class="ct" style="left:1074.5px;top:532px">Konsolite Fark Faturası</div>
<div class="a" style="left:1470px;top:312px;font-size:14.5px;line-height:16px;color:#5d5e68">Statü</div>
<div class="a" style="left:1747px;top:305px;width:121px;height:27px;border-radius:4px;background:#ea5455;box-shadow:0 2px 4px rgba(234,84,85,.35);color:#fff;font-weight:bold;font-size:11.5px;line-height:27px;text-align:center">Fatura Basılmadı</div>
<div class="fld" style="left:1470px;top:347px;width:398px;height:32px"><div class="v ph">Anlaşma Grubu</div><svg class="chev" width="9" height="6" viewBox="0 0 9 6" style="right:11.5px;top:13px"><path d="M0.8 1 L4.5 4.7 L8.2 1" fill="none" stroke="#7d7e86" stroke-width="1"/></svg></div>
<div class="fld" style="left:1470px;top:394px;width:392px;height:32px"><div class="v ph">Anlaşma Tipi</div><svg class="chev" width="9" height="6" viewBox="0 0 9 6" style="right:11.5px;top:13px"><path d="M0.8 1 L4.5 4.7 L8.2 1" fill="none" stroke="#7d7e86" stroke-width="1"/></svg></div>
<div class="fld" style="left:1470px;top:438px;width:398px;height:32px"><div class="l">Vade Tipi</div><div class="v">Son Fatura</div><svg class="chev" width="9" height="6" viewBox="0 0 9 6" style="right:11.5px;top:13px"><path d="M0.8 1 L4.5 4.7 L8.2 1" fill="none" stroke="#7d7e86" stroke-width="1"/></svg></div>
<div class="fld" style="left:1470px;top:482px;width:398px;height:32px"><div class="l">Vade Günü</div><div class="v">60 Gün Vadeli</div><svg class="chev" width="9" height="6" viewBox="0 0 9 6" style="right:11.5px;top:13px"><path d="M0.8 1 L4.5 4.7 L8.2 1" fill="none" stroke="#7d7e86" stroke-width="1"/></svg></div>
<div class="fld" style="left:1470px;top:526px;width:199px;height:32px"><div class="l">Döviz</div><div class="v" style="color:#4b4c55">TL</div><svg class="chev" width="9" height="6" viewBox="0 0 9 6" style="right:11.5px;top:13px"><path d="M0.8 1 L4.5 4.7 L8.2 1" fill="none" stroke="#7d7e86" stroke-width="1"/></svg></div>
<div class="cbx" style="left:1470px;top:577px"></div>
<div class="ct" style="left:1490.5px;top:576px">Sponsorluk</div>
<div class="cbx" style="left:1470px;top:604px;background:#03acb4;border-color:#03acb4;box-shadow:0 1px 3px rgba(3,172,180,.4)"></div>
<svg class="a" style="left:1472px;top:606px" width="10" height="9" viewBox="0 0 10 9"><path d="M1.2 4.5 L3.8 7 L8.8 1.8" fill="none" stroke="#fff" stroke-width="1.6"/></svg>
<div class="ct" style="left:1490.5px;top:603px">Rezervasyon</div>
<div class="cbx" style="left:1470px;top:631px"></div>
<div class="ct" style="left:1490.5px;top:630px">Rezervasyon+Sponsor</div>
<div class="a" style="left:1669px;top:670px;width:120px;height:27px;border-radius:4px;background:#a8aaae;box-shadow:0 2px 4px rgba(120,120,130,.3)"></div>
<svg class="a" style="left:1681px;top:679px" width="11" height="9" viewBox="0 0 11 9"><path d="M10 4.5 H1.5 M4.8 1 L1.3 4.5 L4.8 8" fill="none" stroke="#fff" stroke-width="1.2"/></svg>
<div class="a" style="left:1699px;top:670px;font-size:11.3px;line-height:27px;color:#fff;font-weight:bold">LİSTEYE DÖN</div>
<div class="a" style="left:1795px;top:670px;width:73px;height:27px;border-radius:4px;background:#03acb4;box-shadow:0 2px 4px rgba(3,172,180,.3);color:#fff;font-weight:bold;font-size:11.4px;line-height:27px;text-align:center">KAYDET</div>
<div class="a" style="left:1895px;top:181px;width:25px;height:827px;background:#f0f0f0"></div>
<svg class="a" style="left:1900px;top:190px" width="14" height="9" viewBox="0 0 14 9"><path d="M1 8 L7 1.5 L13 8Z" fill="#a3a3a3"/></svg>
<svg class="a" style="left:1900px;top:991px" width="14" height="9" viewBox="0 0 14 9"><path d="M1 1 L7 7.5 L13 1Z" fill="#a3a3a3"/></svg>
<div class="a" style="left:1865px;top:596px;width:30px;height:30px;border-radius:6px 0 0 6px;background:#03acb4"></div>
<svg class="a" style="left:1872px;top:603px" width="16" height="16" viewBox="0 0 16 16"><path d="M6.8 1.5 H9.2 L9.6 3.3 L11.2 4.2 L13 3.6 L14.2 5.7 L12.8 7 V9 L14.2 10.3 L13 12.4 L11.2 11.8 L9.6 12.7 L9.2 14.5 H6.8 L6.4 12.7 L4.8 11.8 L3 12.4 L1.8 10.3 L3.2 9 V7 L1.8 5.7 L3 3.6 L4.8 4.2 L6.4 3.3Z" fill="none" stroke="#fff" stroke-width="1.2" stroke-linejoin="round"/><circle cx="8" cy="8" r="2.2" fill="none" stroke="#fff" stroke-width="1.2"/></svg>
<div class="a" style="left:213px;top:983px;font-size:11.3px;line-height:14px;color:#6d6e78;white-space:nowrap">© 2024 RYS - Reklam Yönetim Sistemi</div>
<svg class="a" style="left:413px;top:984px" width="13" height="12" viewBox="0 0 13 12"><path d="M6.5 10.8 L1.8 6.2 A2.8 2.8 0 0 1 6.5 2.4 A2.8 2.8 0 0 1 11.2 6.2Z" fill="none" stroke="#03acb4" stroke-width="1.2" stroke-linejoin="round"/></svg>
<div class="a" style="left:1830px;top:983px;font-size:11.3px;line-height:14px;color:#03acb4">Turkuvaz</div>
<div class="a" style="left:726px;top:196px;width:444px;height:87px;border-radius:4px;background:#ff3b30;box-shadow:0 0 8px rgba(0,0,0,.25);overflow:hidden"><div class="a" style="left:0;bottom:0;width:189px;height:3px;background:#ff8a83"></div></div>
<svg class="a" style="left:744px;top:232px" width="15" height="14" viewBox="0 0 15 14"><path d="M7.5 0.8 L14.5 13.2 H0.5Z" fill="#fff" stroke="#fff" stroke-width="1" stroke-linejoin="round"/><path d="M7.5 5 V9" stroke="#ff3b30" stroke-width="1.8"/><circle cx="7.5" cy="11" r="0.95" fill="#ff3b30"/></svg>
<div class="a" style="left:772px;top:213px;width:380px;font-size:12px;line-height:18px;color:#fff;font-weight:bold;letter-spacing:-0.37px;white-space:nowrap">The request field is required..<br>The JSON value could not be converted to System.Double. Path:<br>$.grossAmount | LineNumber: 0 | BytePositionInLine: 463..</div>
<svg class="a" style="left:1142px;top:236px" width="8" height="8" viewBox="0 0 8 8"><path d="M1 1 L7 7 M7 1 L1 7" stroke="#ff9c96" stroke-width="2"/></svg>
<div class="a" style="left:0;top:1008px;width:1920px;height:72px;background:linear-gradient(90deg,#e3ebf6 0px,#e2ebf8 300px,#d9e5fa 400px,#d9def5 600px,#d9e0f5 900px,#d8e2f8 1290px,#d8ddf0 1420px,#e3edf7 1570px,#e3ecf6 1920px);border-top:1px solid #cdd5e2"></div>
<svg class="a" style="left:31px;top:1029px" width="40" height="34" viewBox="0 0 40 34">
<defs><linearGradient id="sung" x1="0" y1="0" x2="0.6" y2="1"><stop offset="0" stop-color="#f7c531"/><stop offset="1" stop-color="#f37a12"/></linearGradient>
<linearGradient id="cldg" x1="0" y1="0" x2="0" y2="1"><stop offset="0" stop-color="#eef4ff"/><stop offset="1" stop-color="#a9c3ef"/></linearGradient></defs>
<circle cx="17" cy="16.5" r="15" fill="url(#sung)"/>
<path d="M14.5 25.5 H30 A3.6 3.6 0 0 0 30.4 18.3 A5.6 5.6 0 0 0 20 17 A4.2 4.2 0 0 0 14.5 25.5Z" fill="url(#cldg)"/></svg>
<div class="a" style="left:47px;top:1019px;width:24px;height:24px;border-radius:50%;background:#c42b1c;box-shadow:0 0 0 1px #d9e3f1"></div>
<div class="a" style="left:47px;top:1019px;width:24px;height:24px;font-size:17px;line-height:24px;color:#fff;text-align:center">1</div>
<div class="a" style="left:77.5px;top:1022px;font-size:17.5px;line-height:22px;color:#1b1b1b">9°C</div>
<div class="a" style="left:77.5px;top:1046px;font-size:17.4px;line-height:22px;color:#5a5a5a">Güneşli</div>
<svg class="a" style="left:642px;top:1028px" width="35" height="35" viewBox="0 0 35 35">
<defs><linearGradient id="wing" x1="0" y1="0" x2="1" y2="1"><stop offset="0" stop-color="#38c7f5"/><stop offset="1" stop-color="#0b6fd6"/></linearGradient></defs>
<path d="M0 2 A2 2 0 0 1 2 0 H17 V17 H0Z M18 0 H33 A2 2 0 0 1 35 2 V17 H18Z M0 18 H17 V35 H2 A2 2 0 0 1 0 33Z M18 18 H35 V33 A2 2 0 0 1 33 35 H18Z" fill="url(#wing)"/></svg>
<div class="a" style="left:698.5px;top:1023px;width:326px;height:45px;border-radius:23px;background:#f1f4fb;border:1px solid #cfd7e6;box-shadow:0 1px 1px rgba(0,0,0,.06)"></div>
<svg class="a" style="left:714px;top:1034px" width="24" height="23" viewBox="0 0 24 23"><circle cx="14" cy="9" r="7" fill="none" stroke="#1b1b1b" stroke-width="2.4"/><path d="M9 14 L2 21" stroke="#1b1b1b" stroke-width="2.8" stroke-linecap="round"/></svg>
<div class="a" style="left:753px;top:1032px;font-size:20px;line-height:26px;color:#4a4a4a">Ara</div>
<div class="a" style="left:940px;top:1024px;width:84px;height:43px;border-radius:22px;background:#ffffff"></div>
<svg class="a" style="left:947px;top:1035px" width="16" height="20" viewBox="0 0 16 20">
<path d="M11.5 6 C6.5 5.5 2 6.8 2.3 9.2 C2.6 10.8 5.5 11 8 10.8" fill="none" stroke="#3b8fe0" stroke-width="2.4" stroke-linecap="round"/>
<path d="M8 10.8 C10.5 10.8 13.5 11.3 13.3 13 C13 14.8 8.5 15.2 4.5 14.6" fill="none" stroke="#26327a" stroke-width="2.4" stroke-linecap="round"/>
<circle cx="9" cy="2" r="1.7" fill="#3b8fe0"/><circle cx="5.5" cy="18" r="1.7" fill="#26327a"/></svg>
<div class="a" style="left:964.5px;top:1034px;font-size:17px;line-height:22px;color:#2b3990;font-weight:bold;letter-spacing:.6px">NetAx</div>
<svg class="a" style="left:1045px;top:1028px" width="36" height="35" viewBox="0 0 36 35">
<defs><linearGradient id="tvg" x1="0" y1="0" x2="1" y2="1"><stop offset="0" stop-color="#ffffff"/><stop offset="1" stop-color="#c9ced6"/></linearGradient>
<linearGradient id="tvd" x1="0" y1="0" x2="0" y2="1"><stop offset="0" stop-color="#4a4a4a"/><stop offset="1" stop-color="#141414"/></linearGradient></defs>
<rect x="0" y="9" width="25" height="26" rx="2" fill="url(#tvd)"/><rect x="10" y="0" width="26" height="24" rx="2" fill="url(#tvg)" opacity=".95"/>
<rect x="10" y="9" width="15" height="15" fill="#bdbfc3"/></svg>
<svg class="a" style="left:1110px;top:1028px" width="37" height="34" viewBox="0 0 37 34">
<path d="M0 2.5 A2.5 2.5 0 0 1 2.5 0 H12 L15 3 H34 A2.5 2.5 0 0 1 36.5 5.5 V10 H0Z" fill="#e8a600"/>
<path d="M0 6 H34.5 A2.5 2.5 0 0 1 37 8.5 V31.5 A2.5 2.5 0 0 1 34.5 34 H2.5 A2.5 2.5 0 0 1 0 31.5Z" fill="#ffd24a"/>
<path d="M6 25 A3 3 0 0 1 9 22 H27 A3 3 0 0 1 30 25 V33 H6Z" fill="#1f82dc"/><path d="M11 27 H25" stroke="#0b4fa8" stroke-width="1.6"/></svg>
<svg class="a" style="left:1177px;top:1028px" width="35" height="35" viewBox="0 0 35 35">
<defs><linearGradient id="stg" x1="0" y1="0" x2="1" y2="1"><stop offset="0" stop-color="#1266c2"/><stop offset="1" stop-color="#243a6b"/></linearGradient></defs>
<path d="M8.5 7 V1.5 H26.5 V7" fill="none" stroke="#22b8f5" stroke-width="2.4"/>
<path d="M0 6 A1.5 1.5 0 0 1 1.5 4.5 H33.5 A1.5 1.5 0 0 1 35 6 V29 A6 6 0 0 1 29 35 H6 A6 6 0 0 1 0 29Z" fill="url(#stg)"/>
<rect x="10" y="12" width="7" height="7" fill="#f25022"/><rect x="18" y="12" width="7" height="7" fill="#7fba00"/><rect x="10" y="20" width="7" height="7" fill="#00a4ef"/><rect x="18" y="20" width="7" height="7" fill="#ffb900"/></svg>
<div class="a" style="left:1233px;top:1017px;width:56px;height:57px;border-radius:6px;background:rgba(255,255,255,.55);box-shadow:0 1px 1px rgba(0,0,0,.08)"></div>
<svg class="a" style="left:1243px;top:1027px" width="36" height="36" viewBox="0 0 36 36">
<path d="M18 18 L3.6 9.7 A16.6 16.6 0 0 1 32.4 9.7Z" fill="#e53e30"/>
<path d="M18 18 L32.4 9.7 A16.6 16.6 0 0 1 18 34.6Z" fill="#f8c21e"/>
<path d="M18 18 L18 34.6 A16.6 16.6 0 0 1 3.6 9.7Z" fill="#2a9b48"/>
<circle cx="18" cy="18" r="9" fill="#fff"/><circle cx="18" cy="18" r="7.3" fill="#3a80e8"/></svg>
<div class="a" style="left:1249px;top:1069px;width:24px;height:5px;border-radius:3px;background:#0a78d4"></div>
<svg class="a" style="left:1575px;top:1038px" width="19" height="11" viewBox="0 0 19 11"><path d="M1 10 L9.5 1.5 L18 10" fill="none" stroke="#1b1b1b" stroke-width="1.6"/></svg>
<svg class="a" style="left:1607px;top:1031px" width="26" height="26" viewBox="0 0 26 26"><path d="M2.2 12 A10.3 10.3 0 0 1 20.5 5.5 M21.5 1 V6.3 H16.3" fill="none" stroke="#1b1b1b" stroke-width="1.6"/><path d="M14 24 A10.3 10.3 0 0 1 4.3 19 M2.2 24.5 V19.2 H7.5" fill="none" stroke="#1b1b1b" stroke-width="1.6"/><circle cx="19.5" cy="19" r="6" fill="#0a78d4"/></svg>
<svg class="a" style="left:1650px;top:1034px" width="24" height="19" viewBox="0 0 24 19"><path d="M1.5 6.5 A15 15 0 0 1 22.5 6.5 M5 10 A10 10 0 0 1 19 10 M8.5 13.5 A5 5 0 0 1 15.5 13.5" fill="none" stroke="#1b1b1b" stroke-width="1.8" stroke-linecap="round"/><circle cx="12" cy="17" r="1.8" fill="#1b1b1b"/></svg>
<svg class="a" style="left:1686px;top:1034px" width="26" height="20" viewBox="0 0 26 20"><path d="M1 6.5 H5 L11 1.5 V18.5 L5 13.5 H1Z" fill="none" stroke="#1b1b1b" stroke-width="1.6" stroke-linejoin="round"/><path d="M14.5 6 A5 5 0 0 1 14.5 14" fill="none" stroke="#1b1b1b" stroke-width="1.6"/><path d="M18 3 A9 9 0 0 1 18 17 M21.5 1 A12 12 0 0 1 21.5 19" fill="none" stroke="#b5bcc8" stroke-width="1.4"/></svg>
<svg class="a" style="left:1722px;top:1036px" width="25" height="16" viewBox="0 0 25 16"><rect x="1" y="1" width="20" height="14" rx="2.5" fill="none" stroke="#1b1b1b" stroke-width="1.6"/><rect x="3.5" y="3.5" width="12" height="9" fill="#1b1b1b"/><path d="M22.5 5.5 H23.5 A1 1 0 0 1 24.5 6.5 V9.5 A1 1 0 0 1 23.5 10.5 H22.5Z" fill="#1b1b1b"/></svg>
<div class="a" style="left:1760px;top:1021px;width:94px;font-size:17.2px;line-height:22px;color:#262626;text-align:right">11:03</div>
<div class="a" style="left:1740px;top:1045px;width:114px;font-size:17.2px;line-height:22px;color:#262626;text-align:right">20.02.2024</div>
<div class="a" style="left:1863px;top:1032px;width:30px;height:24px;border-radius:12px;background:#0a78d4;color:#fff;font-size:16px;line-height:24px;text-align:center">20</div>
</body></html>
